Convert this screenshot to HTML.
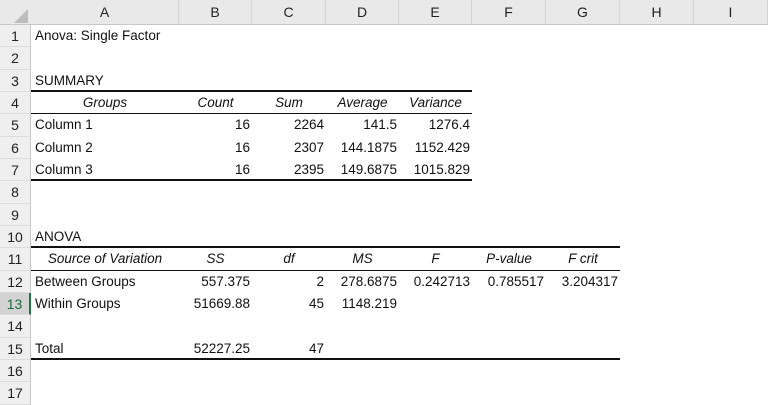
<!DOCTYPE html>
<html><head><style>
body{margin:0;width:768px;height:402px;overflow:hidden;background:#fff;font-family:"Liberation Sans",sans-serif;position:relative}
.hd{position:absolute;top:0;left:0;width:768px;height:25px;background:#e9e9e9;border-bottom:1px solid #c8c8c8;box-sizing:border-box}
.ch{position:absolute;top:0;height:24px;line-height:25px;text-align:center;font-size:14px;color:#222;border-right:1px solid #d4d4d4;box-sizing:border-box}
.rh{position:absolute;left:0;width:31px;background:#efefef;border-right:1px solid #c8c8c8;border-bottom:1px solid #dcdcdc;box-sizing:border-box;text-align:center;font-size:14px;color:#222}
.c{position:absolute;font-size:13.5px;color:#111;white-space:nowrap;height:22px;line-height:22px}
.r{text-align:right}.i{font-style:italic;text-align:center}
.ln{position:absolute;background:#111}
</style></head><body>
<div class="hd"></div>
<svg style="position:absolute;left:14px;top:9px" width="14" height="14"><polygon points="14,0 14,14 0,14" fill="#bdbdbd"/></svg>
<div class="ch" style="left:31px;width:148px">A</div>
<div class="ch" style="left:179px;width:73px">B</div>
<div class="ch" style="left:252px;width:74px">C</div>
<div class="ch" style="left:326px;width:73px">D</div>
<div class="ch" style="left:399px;width:73px">E</div>
<div class="ch" style="left:472px;width:74px">F</div>
<div class="ch" style="left:546px;width:74px">G</div>
<div class="ch" style="left:620px;width:74px">H</div>
<div class="ch" style="left:694px;width:74px">I</div>
<div id="rows"></div>
<script>
var h=22.33,t=25,s='';
for(var n=1;n<=17;n++){var y=t+(n-1)*h;var sel=n==13;
s+='<div class="rh" style="top:'+y+'px;height:'+h+'px;line-height:'+h+'px;'+(sel?'background:#d3d3d3;color:#1e6b3e;border-right:2px solid #217346':'')+'">'+n+'</div>';}
document.getElementById('rows').innerHTML=s;
function c(row,x,w,txt,cls){var y=t+(row-1)*h;document.write('<div class="c '+(cls||'')+'" style="top:'+y+'px;left:'+x+'px;width:'+w+'px">'+txt+'</div>');}
function L(row,x1,x2,th){var y=t+row*h-th;document.write('<div class="ln" style="top:'+y+'px;left:'+x1+'px;width:'+(x2-x1)+'px;height:'+th+'px"></div>');}
var X=[35,179,252,326,399,472,546,620];
c(1,35,200,'Anova: Single Factor');c(3,35,200,'SUMMARY');
L(3,31,472,2);L(4,31,472,1);L(7,31,472,2);
c(4,31,148,'Groups','i');c(4,179,73,'Count','i');c(4,252,74,'Sum','i');c(4,326,73,'Average','i');c(4,399,73,'Variance','i');
var d=[['Column 1','16','2264','141.5','1276.4'],['Column 2','16','2307','144.1875','1152.429'],['Column 3','16','2395','149.6875','1015.829']];
for(var i=0;i<3;i++){c(5+i,35,140,d[i][0]);for(var j=1;j<5;j++)c(5+i,X[j+1]-72,70,d[i][j],'r');}
c(10,35,200,'ANOVA');L(10,31,620,2);L(11,31,620,1);L(15,31,620,2);
var hh=['SS','df','MS','F','P-value','F crit'];
c(11,31,148,'Source of Variation','i');for(var j=0;j<6;j++)c(11,X[j+1],X[j+2]-X[j+1],hh[j],'i');
var a=[[12,'Between Groups','557.375','2','278.6875','0.242713','0.785517','3.204317'],[13,'Within Groups','51669.88','45','1148.219'],[15,'Total','52227.25','47']];
for(var i=0;i<3;i++){c(a[i][0],35,140,a[i][1]);for(var j=2;j<a[i].length;j++)c(a[i][0],X[j]-72,70,a[i][j],'r');}
</script>
</body></html>
